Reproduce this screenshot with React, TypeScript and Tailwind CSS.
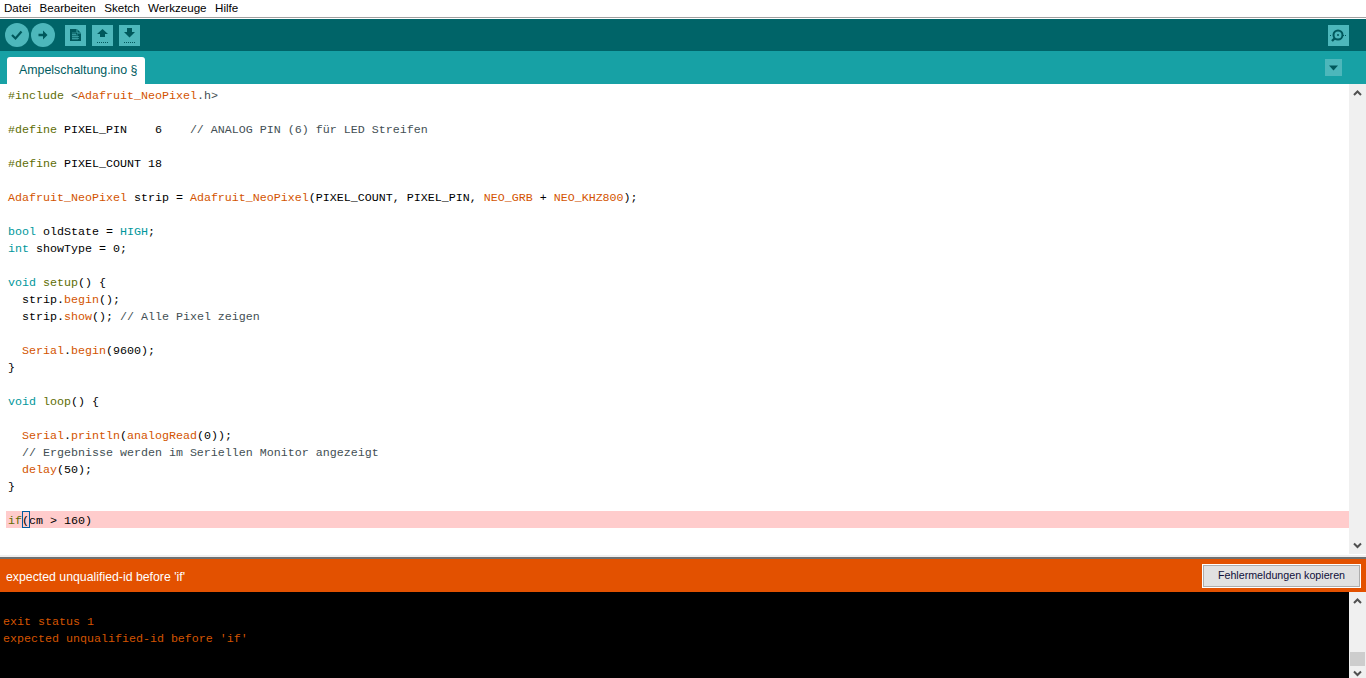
const O = "text-[#d35400]";
const G = "text-[#5e6d03]";
const T = "text-[#00979c]";
const C = "text-[#434f54]";
type Tok = string | [string, string];
const lines: Tok[][] = [
  [["#include", G], " ", ["<", C], ["Adafruit_NeoPixel", O], [".h>", C]],
  [],
  [["#define", G], " PIXEL_PIN    6    ", ["// ANALOG PIN (6) für LED Streifen", C]],
  [],
  [["#define", G], " PIXEL_COUNT 18"],
  [],
  [["Adafruit_NeoPixel", O], " strip = ", ["Adafruit_NeoPixel", O], "(PIXEL_COUNT, PIXEL_PIN, ", ["NEO_GRB", O], " + ", ["NEO_KHZ800", O], ");"],
  [],
  [["bool", T], " oldState = ", ["HIGH", T], ";"],
  [["int", T], " showType = 0;"],
  [],
  [["void", T], " ", ["setup", G], "() {"],
  ["  strip.", ["begin", O], "();"],
  ["  strip.", ["show", O], "(); ", ["// Alle Pixel zeigen", C]],
  [],
  ["  ", ["Serial", O], ".", ["begin", O], "(9600);"],
  ["}"],
  [],
  [["void", T], " ", ["loop", G], "() {"],
  [],
  ["  ", ["Serial", O], ".", ["println", O], "(", ["analogRead", O], "(0));"],
  ["  ", ["// Ergebnisse werden im Seriellen Monitor angezeigt", C]],
  ["  ", ["delay", O], "(50);"],
  ["}"],
  [],
];

function Square({ children }: { children: React.ReactNode }) {
  return <div className="w-[21px] h-[21px] bg-[#4db7bb] flex items-center justify-center">{children}</div>;
}
function Round({ children }: { children: React.ReactNode }) {
  return <div className="w-[24px] h-[24px] rounded-full bg-[#4db7bb] flex items-center justify-center">{children}</div>;
}
const Up = () => (
  <svg width="17" height="17" viewBox="0 0 17 17"><path d="M5 11 L8.5 7.5 L12 11" fill="none" stroke="#505050" strokeWidth="2" /></svg>
);
const Down = () => (
  <svg width="17" height="17" viewBox="0 0 17 17"><path d="M5 6.5 L8.5 10 L12 6.5" fill="none" stroke="#505050" strokeWidth="2" /></svg>
);
const D = "#00585c";
const L = "#4db7bb";

export default function App() {
  return (
    <div className="w-[1366px] h-[678px] overflow-hidden flex flex-col bg-white font-['Liberation_Sans',sans-serif]">
      <div className="h-[17px] flex items-center pl-1 pb-[2px] gap-[8.5px] text-[11.6px] text-black leading-none">
        {["Datei", "Bearbeiten", "Sketch", "Werkzeuge", "Hilfe"].map((m) => (
          <span key={m}>{m}</span>
        ))}
      </div>
      <div className="h-[2px] bg-[#a0a0a0] border-b border-white" />
      <div className="h-[32px] bg-[#006468] flex items-center pl-[5px] pr-[17px]">
        <div className="flex gap-[2px]">
          <Round>
            <svg width="14" height="14" viewBox="0 0 14 14"><path d="M2 7 L5.5 10.5 L11.5 3.5" fill="none" stroke={D} strokeWidth="2.2" /></svg>
          </Round>
          <Round>
            <svg width="14" height="14" viewBox="0 0 14 14"><path d="M2.5 5.7 H7 V2.5 L11.5 7 L7 11.5 V8.3 H2.5 Z" fill={D} /></svg>
          </Round>
        </div>
        <div className="flex gap-[6px] ml-[10px]">
          <Square>
            <svg width="21" height="21" viewBox="0 0 21 21">
              <path d="M5 4 H12 L16 8 V16 H5 Z" fill={D} />
              <path d="M12 4 V8 H16" fill="none" stroke={L} strokeWidth="0.8" />
              <path d="M7 9.5 H11 M7 11.5 H14 M7 13.5 H14 M8 7 V15 M10 7 V15 M12 9 V15" stroke={L} strokeWidth="0.6" />
            </svg>
          </Square>
          <Square>
            <svg width="21" height="21" viewBox="0 0 21 21">
              <path d="M10.5 4 L16 9 H13 V12 H8 V9 H5 Z" fill={D} />
              <path d="M5 17.5 H16" stroke={D} strokeDasharray="1 1" strokeWidth="1" />
            </svg>
          </Square>
          <Square>
            <svg width="21" height="21" viewBox="0 0 21 21">
              <path d="M8 3 H13 V7 H16 L10.5 12.5 L5 7 H8 Z" fill={D} />
              <path d="M5 17.5 H16" stroke={D} strokeDasharray="1 1" strokeWidth="1" />
            </svg>
          </Square>
        </div>
        <div className="ml-auto">
          <Square>
            <svg width="21" height="21" viewBox="0 0 21 21">
              <circle cx="10" cy="10" r="4.5" fill="none" stroke={D} strokeWidth="2" />
              <circle cx="10" cy="10" r="1" fill={D} />
              <path d="M6.5 13.5 L4 16" stroke={D} strokeWidth="2.4" />
              <path d="M2 10.5 H4 M15 10.5 H19" stroke={D} strokeDasharray="1 1" />
            </svg>
          </Square>
        </div>
      </div>
      <div className="h-[33px] bg-[#17a1a5] flex items-end pl-[7px] pr-[24px]">
        <div className="w-[138px] h-[27px] bg-white rounded-t-[3px] flex items-center pl-[12px] pb-[1px] text-[12.4px] text-[#005c5f]">
          Ampelschaltung.ino §
        </div>
        <div className="ml-auto self-center w-[17px] h-[17px] bg-[#4db7bb] flex items-center justify-center">
          <svg width="11" height="6" viewBox="0 0 11 6"><path d="M1 0.5 H10 L5.5 5.5 Z" fill={D} /></svg>
        </div>
      </div>
      <div className="h-[471px] flex">
        <div className="flex-1 pt-[2px] text-[11.67px] leading-[21px] text-black font-['Liberation_Mono',monospace] whitespace-pre">
          {lines.map((l, i) => (
            <div key={i} className="h-[17px] pl-2">
              {l.map((t, j) => (typeof t === "string" ? <span key={j}>{t}</span> : <span key={j} className={t[1]}>{t[0]}</span>))}
            </div>
          ))}
          <div className="h-[17px] ml-[6px] pl-[2px] bg-[#ffcccc] flex">
            <span className={G}>if</span>
            <span className="relative">
              (
              <span className="absolute left-0 top-0 w-[8px] h-[17px] border border-[#005c9f]" />
            </span>
            <span>cm &gt; 160)</span>
          </div>
        </div>
        <div className="w-[17px] h-[470px] shrink-0 bg-[#f0f0f0] flex flex-col justify-between items-center">
          <Up /><Down />
        </div>
      </div>
      <div className="h-[2px] bg-[#f0f0f0]" />
      <div className="h-[2px] bg-[#707070]" />
      <div className="h-[33px] bg-[#e35100] flex items-center justify-between pl-[6px] pr-[6px] text-[12.3px] text-white">
        <span className="pt-[4px]">expected unqualified-id before 'if'</span>
        <button className="w-[157px] h-[22px] bg-[#e1e1e1] border border-[#adadad] outline outline-1 outline-white text-[10.7px] text-[#10103a]">
          Fehlermeldungen kopieren
        </button>
      </div>
      <div className="flex-1 flex bg-black min-h-0">
        <div className="flex-1 pt-[22px] pl-[3px] text-[11.67px] leading-[17px] text-[#d35400] font-['Liberation_Mono',monospace] whitespace-pre">
          <div>exit status 1</div>
          <div>expected unqualified-id before 'if'</div>
        </div>
        <div className="w-[17px] h-[90px] shrink-0 bg-[#f0f0f0] flex flex-col justify-between items-center relative">
          <Up />
          <div className="absolute left-[1px] top-[60px] w-[15px] h-[14px] bg-[#cdcdcd]" />
          <Down />
        </div>
      </div>
    </div>
  );
}
